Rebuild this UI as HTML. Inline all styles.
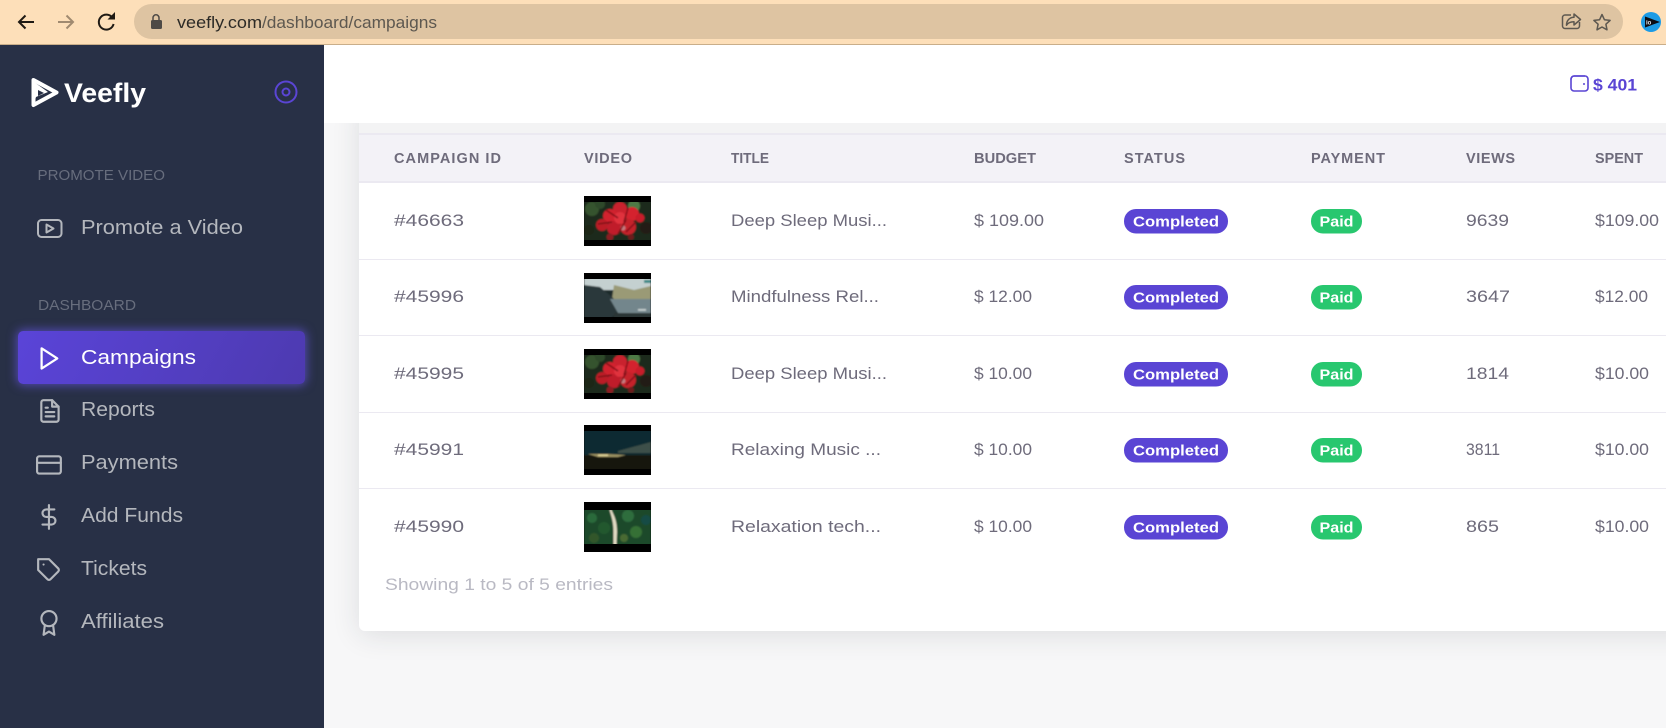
<!DOCTYPE html>
<html lang="en"><head><meta charset="utf-8"><title>Veefly - Campaigns</title>
<style>
html,body{margin:0;padding:0;width:1666px;height:728px;overflow:hidden;background:#f7f7f8;font-family:"Liberation Sans",sans-serif}
.a{position:absolute}
svg.p{position:absolute;left:0;top:0;filter:blur(.3px)}
text{font-family:"Liberation Sans",sans-serif}
.nav{font-size:20px;fill:#b4b7bd}
.sec{font-size:14.5px;fill:#676d7d}
.th{font-size:14.5px;font-weight:700;fill:#6e6b7b}
.td{font-size:17px;fill:#6e6b7b}
.bd{font-size:14.5px;font-weight:700;fill:#fff}
.ic{fill:none;stroke:#b4b7bd;stroke-width:2;stroke-linecap:round;stroke-linejoin:round}
</style></head><body>
<div class="a" style="left:359px;top:100px;width:1400px;height:531px;background:#fff;border-radius:6px;box-shadow:0 4px 28px rgba(34,41,47,.12)"></div>
<div class="a" style="left:359px;top:123px;width:1307px;height:10px;background:#f3f3f4"></div>
<div class="a" style="left:359px;top:133px;width:1307px;height:50px;box-sizing:border-box;background:#f3f2f7;border-top:2px solid #ebe9f1;border-bottom:2px solid #ebe9f1"></div>
<div class="a" style="left:359px;top:259px;width:1307px;height:1px;background:#ebe9f1"></div>
<div class="a" style="left:359px;top:335px;width:1307px;height:1px;background:#ebe9f1"></div>
<div class="a" style="left:359px;top:412px;width:1307px;height:1px;background:#ebe9f1"></div>
<div class="a" style="left:359px;top:488px;width:1307px;height:1px;background:#ebe9f1"></div>
<div class="a" style="left:324px;top:44px;width:1342px;height:79px;background:#fff"></div>
<div class="a" style="left:0;top:44px;width:324px;height:684px;background:#283046"></div>
<div class="a" style="left:18px;top:331px;width:287px;height:53px;border-radius:5px;background:linear-gradient(118deg,#5a44d8,#4d3ab0);box-shadow:0 0 10px 1px rgba(105,88,235,.7)"></div>
<div class="a" style="left:0;top:0;width:1666px;height:44px;background:#fddfb9;border-bottom:1px solid #c9ae8a"></div>
<div class="a" style="left:134px;top:4px;width:1489px;height:35px;border-radius:18px;background:#dec4a2"></div>

<svg class="p" width="1666" height="728" viewBox="0 0 1666 728" xmlns="http://www.w3.org/2000/svg">
<defs>
<filter id="b" x="-10%" y="-10%" width="120%" height="120%"><feGaussianBlur stdDeviation="0.8"/></filter>
<clipPath id="c1"><rect y="6" width="67" height="38"/></clipPath>
<clipPath id="c2"><rect y="8" width="67" height="34"/></clipPath>
<g id="rose">
<rect width="67" height="50" fill="#000"/>
<g clip-path="url(#c1)"><g filter="url(#b)">
<rect y="4" width="67" height="42" fill="#1f2a1a"/>
<circle cx="8" cy="13" r="7" fill="#35532f"/><circle cx="50" cy="10" r="6" fill="#4d7a45"/><circle cx="16" cy="8" r="5" fill="#2f4a2a"/><circle cx="62" cy="32" r="6" fill="#241f18"/><circle cx="5" cy="34" r="5" fill="#1a2715"/>
<circle cx="36" cy="13" r="7" fill="#c9202d"/><circle cx="26" cy="20" r="7" fill="#d1212e"/><circle cx="48" cy="18" r="7" fill="#d4222e"/><circle cx="56" cy="22" r="4.500" fill="#c81f2a"/>
<circle cx="18" cy="29" r="6" fill="#bb1c28"/><circle cx="30" cy="32" r="7" fill="#c01e2a"/><circle cx="44" cy="31" r="8" fill="#c4202b"/><circle cx="36" cy="22" r="6" fill="#e0303c"/>
<circle cx="39" cy="32" r="2.500" fill="#c47d80"/><circle cx="26" cy="41" r="3.500" fill="#8d1f22"/><circle cx="47" cy="41" r="3" fill="#6e1a1c"/>
<path d="M22 14L34 22M44 12L40 26M14 28L28 26M34 38L42 24M52 26L42 36" stroke="#7f1119" stroke-width="1.400" fill="none"/>
</g></g></g>
<g id="lake">
<rect width="67" height="50" fill="#000"/>
<g clip-path="url(#c1)"><g filter="url(#b)">
<rect y="4" width="67" height="42" fill="#1e2a29"/>
<rect y="4" width="67" height="13" fill="#c4d0d0"/>
<path d="M30 12L50 17L67 13V26H28z" fill="#9a9a76"/>
<path d="M0 12L16 14L28 24L38 34L26 46H0z" fill="#29393a"/>
<path d="M26 26H67V40H34z" fill="#73868c"/>
<rect x="60" y="7" width="7" height="3" fill="#3d8a88"/>
<rect x="54" y="36" width="8" height="1.800" fill="#c8d0d0"/>
<rect x="30" y="40" width="37" height="6" fill="#2a3436"/>
</g></g></g>
<g id="night">
<rect width="67" height="50" fill="#000"/>
<g clip-path="url(#c1)"><g filter="url(#b)">
<rect y="4" width="67" height="42" fill="#0e2c32"/>
<path d="M34 26L67 17V28H34z" fill="#3e4f48"/>
<path d="M0 30H67V46H0z" fill="#14130e"/>
<path d="M4 29H24L42 30L34 32H14z" fill="#9a9060"/>
<path d="M14 29.500H24V31H14z" fill="#e2d69a"/>
</g></g></g>
<g id="road">
<rect width="67" height="50" fill="#000"/>
<g clip-path="url(#c2)"><g filter="url(#b)">
<rect y="6" width="67" height="38" fill="#1c4a2c"/>
<circle cx="8" cy="16" r="5" fill="#2a6a3a"/><circle cx="20" cy="26" r="6" fill="#24592f"/><circle cx="44" cy="14" r="6" fill="#2e6d3d"/><circle cx="52" cy="30" r="6" fill="#356f34"/><circle cx="10" cy="36" r="5" fill="#33572a"/><circle cx="62" cy="18" r="5" fill="#144c44"/><circle cx="40" cy="36" r="4" fill="#4a6a30"/>
<path d="M27 7C31 15 33 20 33 30L32.500 44H29.500L29.500 30C29.500 20 27.500 15 25.500 8z" fill="#e2dcc4"/>
</g></g></g>
</defs>

<!-- browser bar -->
<g fill="none" stroke="#1f1a14" stroke-width="2">
<path d="M34 22H19M25.500 15.500L19 22L25.500 28.500"/>
<path d="M58 22H73M66.500 15.500L73 22L66.500 28.500" stroke="#a08a70"/>
<path d="M112.600 18a7.500 7.500 0 1 0 1 6"/>
</g>
<path d="M107.500 19.500H115V12z" fill="#1f1a14"/>
<rect x="151" y="20" width="11" height="9" rx="1.500" fill="#4e4a46"/>
<path d="M153 20v-2.200a3 3 0 0 1 6 0V20" fill="none" stroke="#4e4a46" stroke-width="1.500"/>
<text x="177" y="28" font-size="17" fill="#2c2a26" textLength="85" lengthAdjust="spacingAndGlyphs">veefly.com</text>
<text x="262" y="28" font-size="17" fill="#5d5850" textLength="175" lengthAdjust="spacingAndGlyphs">/dashboard/campaigns</text>
<g fill="none" stroke="#5d5850" stroke-width="1.500" stroke-linejoin="round">
<path d="M1571 15h-6a2.500 2.500 0 0 0-2.500 2.500V26a2.500 2.500 0 0 0 2.500 2.500h12a2.500 2.500 0 0 0 2.500-2.500v-4"/>
<path d="M1574 14l6.500 5.500-6.500 5.500v-3.300c-3.500 0-6 1-7.500 3.500 0-4.500 3-8 7.500-8z"/>
<path d="M1602 14.500l2.400 5.200 5.700.7-4.200 3.800 1.100 5.600-5-2.800-5 2.800 1.100-5.600-4.200-3.800 5.700-.7z"/>
</g>
<circle cx="1651" cy="22" r="10" fill="#1c9be6"/>
<path d="M1645 16.500L1660 22L1645 27.500z" fill="#0c0c12"/>
<text x="1646" y="24.300" font-size="6" font-weight="700" fill="#dfe6ee">io</text>

<!-- logo -->
<path d="M33.500 80L56.500 92.500L33.500 105z" fill="none" stroke="#fff" stroke-width="4" stroke-linejoin="round"/>
<path d="M34 82L48 92L36 97L34 104z" fill="#fff"/>
<path d="M38 90L44 93L38 96z" fill="#283046"/>
<text x="64" y="102" font-size="27" font-weight="700" fill="#fff" textLength="82" lengthAdjust="spacingAndGlyphs">Veefly</text>
<circle cx="286" cy="92" r="10.500" fill="none" stroke="#5a45d4" stroke-width="2"/>
<circle cx="286" cy="92" r="3.500" fill="none" stroke="#5a45d4" stroke-width="2"/>

<!-- sidebar -->
<text class="sec" x="37.500" y="180" textLength="127.500" lengthAdjust="spacingAndGlyphs">PROMOTE VIDEO</text>
<rect x="38" y="220" width="23.500" height="17" rx="3.500" class="ic"/>
<path d="M46.500 224.500L53.500 228.500L46.500 232.500z" class="ic" stroke-width="1.500"/>
<text class="nav" x="81" y="234" textLength="162" lengthAdjust="spacingAndGlyphs">Promote a Video</text>
<text class="sec" x="38" y="310" textLength="98" lengthAdjust="spacingAndGlyphs">DASHBOARD</text>

<g transform="translate(36 345) scale(1.12)"><polygon points="5 3 19 12 5 21 5 3" fill="none" stroke="#fff" stroke-width="2" stroke-linejoin="round"/></g>
<text x="81" y="364" font-size="20" fill="#fff" textLength="115" lengthAdjust="spacingAndGlyphs">Campaigns</text>

<g transform="translate(37 398) scale(1.08)" class="ic"><path d="M14 2H6a2 2 0 0 0-2 2v16a2 2 0 0 0 2 2h12a2 2 0 0 0 2-2V8z"/><polyline points="14 2 14 8 20 8"/><line x1="16" y1="13" x2="8" y2="13"/><line x1="16" y1="17" x2="8" y2="17"/><polyline points="10 9 9 9 8 9"/></g>
<text class="nav" x="81" y="416" textLength="74" lengthAdjust="spacingAndGlyphs">Reports</text>

<g transform="translate(36 452) scale(1.08)" class="ic"><rect x="1" y="4" width="22" height="16" rx="2"/><line x1="1" y1="10" x2="23" y2="10"/></g>
<text class="nav" x="81" y="469" textLength="97" lengthAdjust="spacingAndGlyphs">Payments</text>

<g transform="translate(36 504) scale(1.08)" class="ic"><line x1="12" y1="1" x2="12" y2="23"/><path d="M17 5H9.500a3.500 3.500 0 0 0 0 7h5a3.500 3.500 0 0 1 0 7H6"/></g>
<text class="nav" x="81" y="522" textLength="102" lengthAdjust="spacingAndGlyphs">Add Funds</text>

<g transform="translate(36 557) scale(1.08)" class="ic"><path d="M20.590 13.410l-7.170 7.170a2 2 0 0 1-2.830 0L2 12V2h10l8.590 8.590a2 2 0 0 1 0 2.820z"/><line x1="7" y1="7" x2="7.010" y2="7"/></g>
<text class="nav" x="81" y="575" textLength="66" lengthAdjust="spacingAndGlyphs">Tickets</text>

<g transform="translate(36 610) scale(1.08)" class="ic"><circle cx="12" cy="8" r="7"/><polyline points="8.210 13.890 7 23 12 20 17 23 15.790 13.880"/></g>
<text class="nav" x="81" y="628" textLength="83" lengthAdjust="spacingAndGlyphs">Affiliates</text>

<!-- header balance -->
<g fill="none" stroke="#5a45d4" stroke-width="1.600">
<rect x="1571" y="76" width="17" height="15" rx="3"/><path d="M1571 79.500c0-2 1.500-3.500 3-3.500h11"/>
</g><circle cx="1584" cy="84" r="1" fill="#5a45d4"/>
<text x="1593" y="90.500" font-size="17" font-weight="700" fill="#5a45d4" textLength="44" lengthAdjust="spacingAndGlyphs">$ 401</text>

<!-- table head -->
<text class="th" x="394" y="163" textLength="107" lengthAdjust="spacing">CAMPAIGN ID</text>
<text class="th" x="584" y="163" textLength="48" lengthAdjust="spacing">VIDEO</text>
<text class="th" x="731" y="163" textLength="38" lengthAdjust="spacingAndGlyphs">TITLE</text>
<text class="th" x="974" y="163" textLength="62" lengthAdjust="spacingAndGlyphs">BUDGET</text>
<text class="th" x="1124" y="163" textLength="61" lengthAdjust="spacing">STATUS</text>
<text class="th" x="1311" y="163" textLength="74" lengthAdjust="spacing">PAYMENT</text>
<text class="th" x="1466" y="163" textLength="49" lengthAdjust="spacing">VIEWS</text>
<text class="th" x="1595" y="163" textLength="48" lengthAdjust="spacingAndGlyphs">SPENT</text>

<!-- row 1 -->
<text class="td" x="394" y="226" textLength="70" lengthAdjust="spacingAndGlyphs">#46663</text>
<use href="#rose" x="584" y="196"/>
<text class="td" x="731" y="226" textLength="156" lengthAdjust="spacingAndGlyphs">Deep Sleep Musi...</text>
<text class="td" x="974" y="226" textLength="70" lengthAdjust="spacingAndGlyphs">$ 109.00</text>
<rect x="1124" y="209" width="104" height="24.500" rx="12" fill="#5a45d4"/><text class="bd" x="1133" y="226.500" textLength="86" lengthAdjust="spacingAndGlyphs">Completed</text>
<rect x="1311" y="209" width="51" height="24.500" rx="12" fill="#28c76f"/><text class="bd" x="1319.500" y="226.500" textLength="34" lengthAdjust="spacingAndGlyphs">Paid</text>
<text class="td" x="1466" y="226" textLength="43" lengthAdjust="spacingAndGlyphs">9639</text>
<text class="td" x="1595" y="226" textLength="64" lengthAdjust="spacingAndGlyphs">$109.00</text>

<!-- row 2 -->
<text class="td" x="394" y="302" textLength="70" lengthAdjust="spacingAndGlyphs">#45996</text>
<use href="#lake" x="584" y="273"/>
<text class="td" x="731" y="302" textLength="148" lengthAdjust="spacingAndGlyphs">Mindfulness Rel...</text>
<text class="td" x="974" y="302" textLength="58" lengthAdjust="spacingAndGlyphs">$ 12.00</text>
<rect x="1124" y="285" width="104" height="24.500" rx="12" fill="#5a45d4"/><text class="bd" x="1133" y="302.500" textLength="86" lengthAdjust="spacingAndGlyphs">Completed</text>
<rect x="1311" y="285" width="51" height="24.500" rx="12" fill="#28c76f"/><text class="bd" x="1319.500" y="302.500" textLength="34" lengthAdjust="spacingAndGlyphs">Paid</text>
<text class="td" x="1466" y="302" textLength="44" lengthAdjust="spacingAndGlyphs">3647</text>
<text class="td" x="1595" y="302" textLength="53" lengthAdjust="spacingAndGlyphs">$12.00</text>

<!-- row 3 -->
<text class="td" x="394" y="379" textLength="70" lengthAdjust="spacingAndGlyphs">#45995</text>
<use href="#rose" x="584" y="349"/>
<text class="td" x="731" y="379" textLength="156" lengthAdjust="spacingAndGlyphs">Deep Sleep Musi...</text>
<text class="td" x="974" y="379" textLength="58" lengthAdjust="spacingAndGlyphs">$ 10.00</text>
<rect x="1124" y="362" width="104" height="24.500" rx="12" fill="#5a45d4"/><text class="bd" x="1133" y="379.500" textLength="86" lengthAdjust="spacingAndGlyphs">Completed</text>
<rect x="1311" y="362" width="51" height="24.500" rx="12" fill="#28c76f"/><text class="bd" x="1319.500" y="379.500" textLength="34" lengthAdjust="spacingAndGlyphs">Paid</text>
<text class="td" x="1466" y="379" textLength="43" lengthAdjust="spacingAndGlyphs">1814</text>
<text class="td" x="1595" y="379" textLength="54" lengthAdjust="spacingAndGlyphs">$10.00</text>

<!-- row 4 -->
<text class="td" x="394" y="455" textLength="70" lengthAdjust="spacingAndGlyphs">#45991</text>
<use href="#night" x="584" y="425"/>
<text class="td" x="731" y="455" textLength="150" lengthAdjust="spacingAndGlyphs">Relaxing Music ...</text>
<text class="td" x="974" y="455" textLength="58" lengthAdjust="spacingAndGlyphs">$ 10.00</text>
<rect x="1124" y="438" width="104" height="24.500" rx="12" fill="#5a45d4"/><text class="bd" x="1133" y="455.500" textLength="86" lengthAdjust="spacingAndGlyphs">Completed</text>
<rect x="1311" y="438" width="51" height="24.500" rx="12" fill="#28c76f"/><text class="bd" x="1319.500" y="455.500" textLength="34" lengthAdjust="spacingAndGlyphs">Paid</text>
<text class="td" x="1466" y="455" textLength="34" lengthAdjust="spacingAndGlyphs">3811</text>
<text class="td" x="1595" y="455" textLength="54" lengthAdjust="spacingAndGlyphs">$10.00</text>

<!-- row 5 -->
<text class="td" x="394" y="532" textLength="70" lengthAdjust="spacingAndGlyphs">#45990</text>
<use href="#road" x="584" y="502"/>
<text class="td" x="731" y="532" textLength="150" lengthAdjust="spacingAndGlyphs">Relaxation tech...</text>
<text class="td" x="974" y="532" textLength="58" lengthAdjust="spacingAndGlyphs">$ 10.00</text>
<rect x="1124" y="515" width="104" height="24.500" rx="12" fill="#5a45d4"/><text class="bd" x="1133" y="532.500" textLength="86" lengthAdjust="spacingAndGlyphs">Completed</text>
<rect x="1311" y="515" width="51" height="24.500" rx="12" fill="#28c76f"/><text class="bd" x="1319.500" y="532.500" textLength="34" lengthAdjust="spacingAndGlyphs">Paid</text>
<text class="td" x="1466" y="532" textLength="33" lengthAdjust="spacingAndGlyphs">865</text>
<text class="td" x="1595" y="532" textLength="54" lengthAdjust="spacingAndGlyphs">$10.00</text>

<text x="385" y="590" font-size="17" fill="#b9b9c3" textLength="228" lengthAdjust="spacingAndGlyphs">Showing 1 to 5 of 5 entries</text>
</svg>
</body></html>
